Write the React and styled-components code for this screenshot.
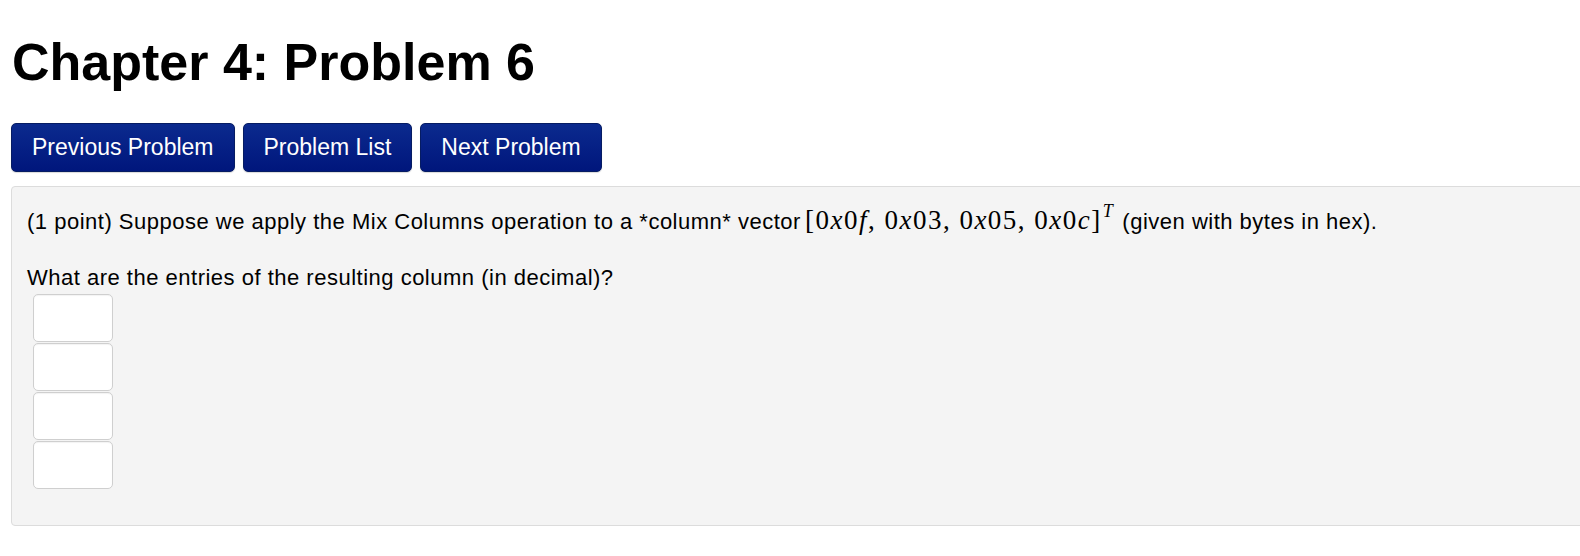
import styled, { createGlobalStyle } from 'styled-components'

const Global = createGlobalStyle`
    html, body {
        margin : 0;
        padding : 0;
        background : #fff;
    }
    body {
        font-family : "Liberation Sans", Arial, sans-serif;
        color : #000;
        overflow : hidden;
    }
`

const Page = styled.div`
    padding : 0 0 0 11px;
`

const Title = styled.h1`
    font-size : 52px;
    line-height : 57px;
    font-weight : bold;
    margin : 34px 0 32px 1px;
`

const Nav = styled.div`
    display : flex;
    gap : 8px;
`

const NavButton = styled.button`
    height : 49px;
    padding : 0 20px;
    font-family : "Liberation Sans", Arial, sans-serif;
    font-size : 23px;
    color : #fff;
    background : linear-gradient(#0b2a8e, #00167c);
    border : 1px solid #061c63;
    border-radius : 5px;
    box-shadow : 0 1px 1px rgba(0, 0, 0, 0.15);
    cursor : pointer;
`

const Panel = styled.div`
    margin-top : 14px;
    width : 1600px;
    height : 340px;
    box-sizing : border-box;
    background : #f4f4f4;
    border : 1px solid #dcdcdc;
    border-radius : 4px;
    padding : 18px 15px;
`

const Para = styled.p`
    margin : 0;
    font-size : 22px;
    letter-spacing : 0.5px;
    line-height : 30px;
    & + & {
        margin-top : 26px;
    }
`

const Math = styled.span`
    font-family : "Liberation Serif", "Times New Roman", serif;
    font-size : 27px;
    letter-spacing : 1.5px;
    margin : 0 8px 0 4px;
`

const Var = styled.i`
    font-style : italic;
`

const Sup = styled.sup`
    font-size : 18px;
    font-style : italic;
    vertical-align : 12px;
    line-height : 0;
    margin-left : 1px;
`

const Answers = styled.div`
    display : flex;
    flex-direction : column;
    align-items : flex-start;
    gap : 1px;
    margin : 1px 0 0 6px;
`

const AnswerBox = styled.input`
    width : 80px;
    height : 48px;
    box-sizing : border-box;
    background : #fff;
    border : 1px solid #cfcfcf;
    border-radius : 5px;
    box-shadow : inset 0 1px 1px rgba(0, 0, 0, 0.05);
    font-size : 18px;
    padding : 0 6px;
    margin : 0;
`

function Hex({ lead, tail }) {
    return (
        <>
            0<Var>x</Var>{lead}{tail}
        </>
    )
}

export default function App() {
    return (
        <Page>
            <Global />
            <Title>Chapter 4: Problem 6</Title>

            <Nav>
                <NavButton>Previous Problem</NavButton>
                <NavButton>Problem List</NavButton>
                <NavButton>Next Problem</NavButton>
            </Nav>

            <Panel>
                <Para>
                    (1 point) Suppose we apply the Mix Columns operation to a *column* vector
                    <Math>
                        [<Hex lead="0" tail={<Var>f</Var>} />, <Hex lead="0" tail="3" />,{' '}
                        <Hex lead="0" tail="5" />, <Hex lead="0" tail={<Var>c</Var>} />]<Sup>T</Sup>
                    </Math>
                    (given with bytes in hex).
                </Para>
                <Para>What are the entries of the resulting column (in decimal)?</Para>
                <Answers>
                    <AnswerBox />
                    <AnswerBox />
                    <AnswerBox />
                    <AnswerBox />
                </Answers>
            </Panel>
        </Page>
    )
}
